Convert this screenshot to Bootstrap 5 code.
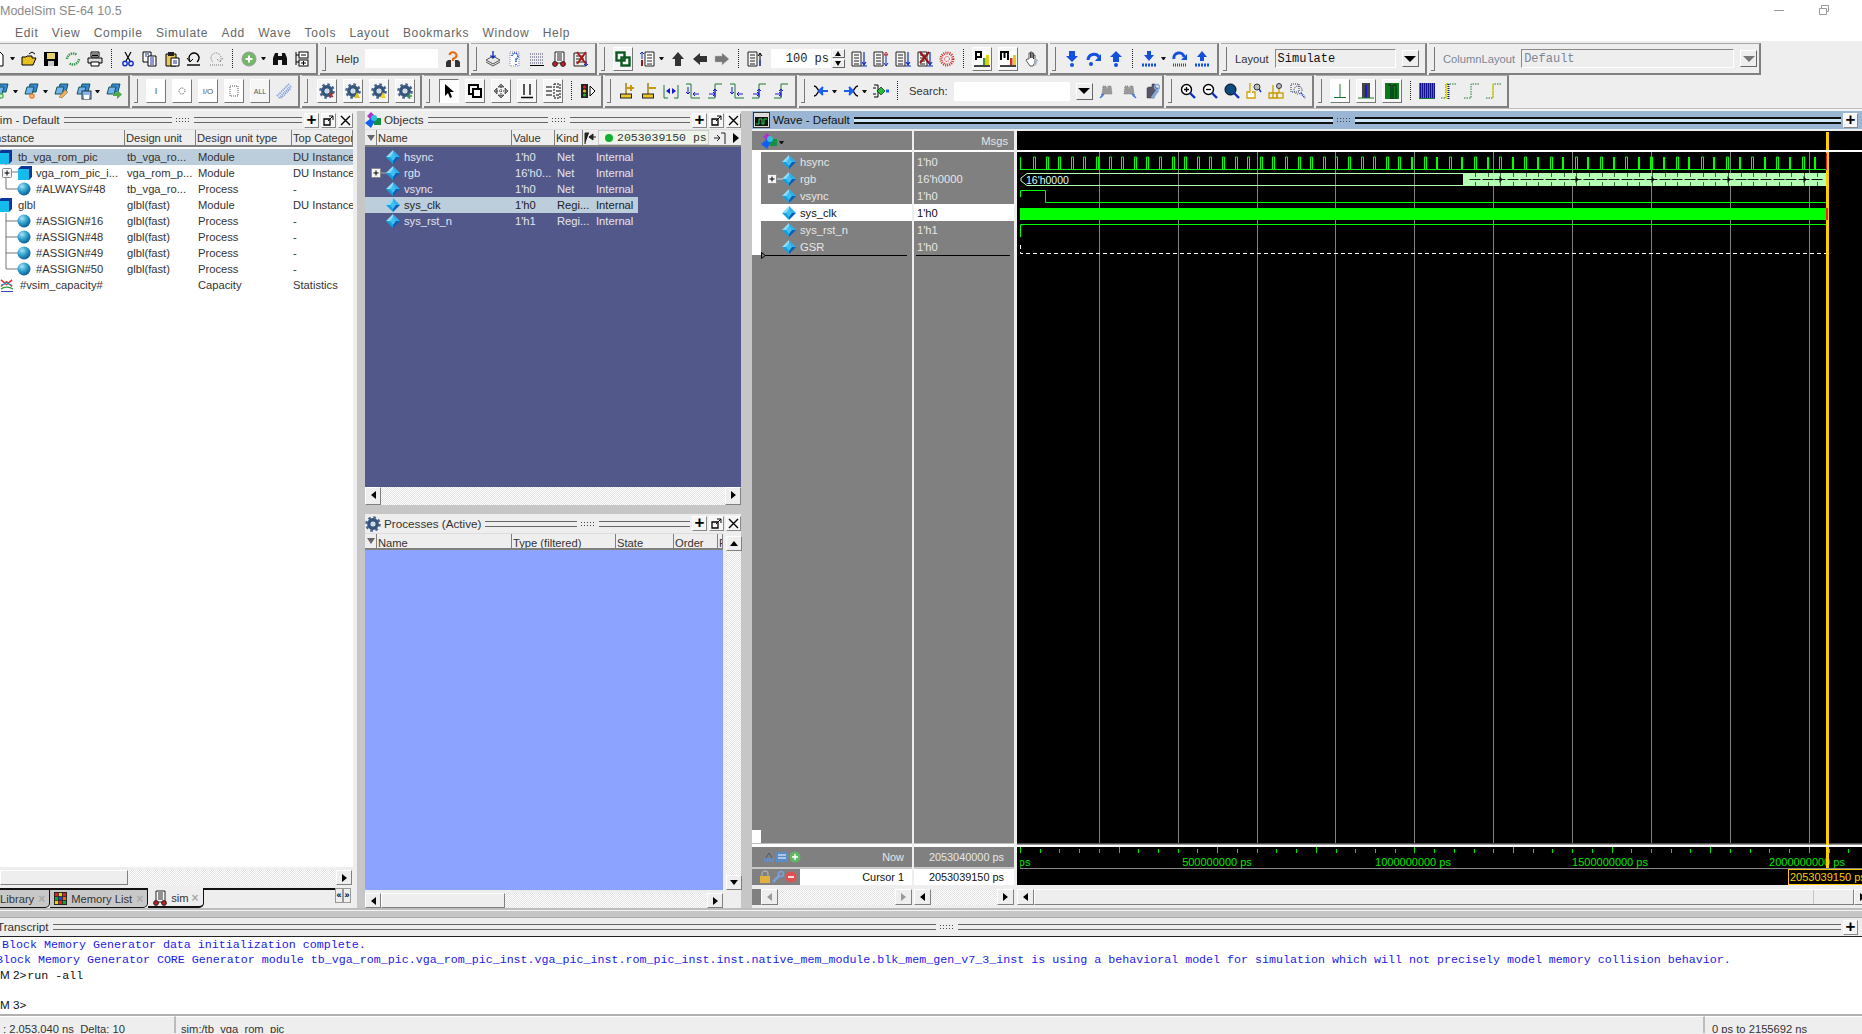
<!DOCTYPE html>
<html lang="en">
<head>
<meta charset="UTF-8">
<title>ModelSim SE-64 10.5</title>
<link href="https://cdn.jsdelivr.net/npm/bootstrap@5.3.0/dist/css/bootstrap.min.css" rel="stylesheet">
<style>
html,body{margin:0;height:1034px;overflow:hidden;background:#eee}
body{font:11.2px/16px "Liberation Sans",Arial,sans-serif;color:#333;width:1862px}
svg{display:block;flex:none;overflow:visible}
.ttl{height:22px;background:#fff;color:#8a8a8a;font-size:12.5px;line-height:23px;position:relative}
.winbtn{position:absolute;top:0;right:0;display:flex;gap:35px;padding:5px 33px 0 0}
.mnu{height:19px;background:#fff;color:#666;font-size:12px;letter-spacing:.7px;line-height:22px;gap:13.3px;padding-left:15px}
.band{height:2px;background:#eee}
.tr1,.tr2{display:grid;column-gap:2px;background:#eee;justify-content:start}
.tr1{height:32px;grid-template-columns:318px 149px 126px 449px 169px 206px 332px}
.tr2{height:33px;grid-template-columns:130px 168px 120px 179px 192px 365px 148px 193px}
.seg{display:flex;align-items:center;gap:6px;padding-left:2px;border-right:2px solid #808080;border-bottom:2px solid #808080;border-top:1px solid #a8a8a8;overflow:hidden;white-space:nowrap}
.seg.first{padding-left:0}
.grip{width:4px;height:24px;border:1px solid #777;border-top:0;border-left:0;margin-right:2px;flex:none}
.ti{width:16px;height:16px}
.dd{width:5px;height:3px;margin-left:-2px;border-top:3px solid #111;border-left:2.5px solid transparent;border-right:2.5px solid transparent;flex:none}
.dd2{margin:0 0 0 -3px}
.sp{width:1px;height:20px;margin:0 2px;background-image:linear-gradient(#222 50%,transparent 50%);background-size:1px 2px;flex:none}
.bx{width:20px;height:24px;display:flex;align-items:center;justify-content:center;flex:none;background:#f6f6f6;border:1px solid;border-color:#fff #777 #777 #fff}
.bx.dn{background:#fff;border-color:#777 #fff #fff #777}
.wt{background:#fff}
.tinp{border:0;outline:0;background:#fff;height:19px;padding:0 2px;font:12px "Liberation Mono",monospace;color:#222;flex:none}
.lbl{flex:none}
.cmb{height:19px;border:1px solid;border-color:#8a8a8a #fff #fff #8a8a8a;font:12px/18px "Liberation Mono",monospace;padding-left:2px;color:#111;flex:none}
.cbtn{width:17px;height:17px;background:#eee;border:1px solid;border-color:#fff #666 #666 #fff;display:flex;align-items:center;justify-content:center;flex:none}
.tri-d{width:0;height:0;border-top:6px solid #000;border-left:6px solid transparent;border-right:6px solid transparent}
.off{color:#7d8796}
.off .tri-d{border-top-color:#777}
.spin{width:13px;flex:none;display:flex;flex-direction:column;gap:1px;margin-left:-5px}
.spin b{height:9px;background:#eee;border:1px solid;border-color:#fff #666 #666 #fff;position:relative;display:block}
.spin b::after{content:"";position:absolute;left:2px;top:1px;border:3.5px solid transparent;border-top:0;border-bottom:5px solid #000}
.spin b+b::after{border-bottom:0;border-top:5px solid #000}
.hline{height:3px;background:linear-gradient(#bdbdbd 33%,#f4f4f4 33%)}
.wrk{display:flex;height:797px;background:#c6c6c6}
.pl{width:357px;background:#eee;display:flex;flex-direction:column}
.pm{width:376px;margin-left:8px;display:flex;flex-direction:column}
.pr{width:1110px;margin-left:11px;display:flex;flex-direction:column;background:#eee}
.ptl{height:18px;background:#eee;display:flex;align-items:center;gap:3px;white-space:nowrap;overflow:hidden;flex:none}
.ptl .nm{font-size:11.7px}
.dbl{flex:1 1 0;height:6px;border-top:1px solid #666;border-bottom:1px solid #666}
.dots{width:16px;height:6px;flex:none;background-image:radial-gradient(#444 40%,transparent 45%);background-size:3px 3px}
.pbt{width:15px;height:15px;flex:none;margin-left:-1px;background:#f6f6f6;border:1px solid;border-color:#fff #888 #888 #fff;font:700 17px/12px "Liberation Sans",sans-serif;color:#000;text-align:center}
.pbt svg{margin:1px}
.hd{height:18px;display:grid;background:#eee;border-top:1px solid #ddd;border-bottom:2px solid #808080;flex:none;overflow:hidden;white-space:nowrap}
.hd>div{border-right:1px solid #808080;padding-left:1px;overflow:hidden;line-height:17px}
.flt{display:flex;align-items:center;justify-content:center;padding:0!important}
.flt i{border-top:6px solid #666;border-left:4px solid transparent;border-right:4px solid transparent}
.tbody{background:#fff;flex:1 1 0;padding-top:2px;margin-right:4px;overflow:hidden}
.trw{display:grid;grid-template-columns:125px 71px 95px 62px;height:16px;white-space:nowrap;overflow:hidden}
.trw>div{overflow:hidden;display:flex;align-items:center;padding-left:2px}
.trw>div:first-child{padding-left:0}
.sel1{background:#bccddc}
.sb{height:15px;display:flex;background:repeating-conic-gradient(#e2e2e2 0 25%,#fff 0 50%) 0 0/2px 2px;flex:none}
.thm{background:#eee;border:1px solid;border-color:#fff #808080 #808080 #fff;flex:none}
.gr{flex:1 1 0}
.sa{width:16px;height:15px;background:#eee;border:1px solid;border-color:#fff #808080 #808080 #fff;position:relative;flex:none}
.sa::after{content:"";position:absolute;left:5px;top:3px;border:4px solid transparent;border-left:0;border-right:5px solid #000}
.sa.rt::after{border-right:0;border-left:5px solid #000}
.sa.up::after{left:3px;top:4px;border:4px solid transparent;border-top:0;border-bottom:5px solid #000}
.sa.dw::after{left:3px;top:4px;border:4px solid transparent;border-bottom:0;border-top:5px solid #000}
.sa.dis::after{border-left-color:#999;border-right-color:#999}
.tabs{height:20px;display:flex;margin-top:3px;flex:none;white-space:nowrap}
.tb1{display:flex;align-items:center;gap:4px;background:#c8c8c8;border-top:2px solid #111;border-right:1px solid #111;border-bottom:1px solid #111;border-radius:0 0 5px 0;padding:0 4px}
.tb1.act{background:#eee;border-top:0;padding-top:2px;border-bottom:2px solid #111;gap:3px}
.tbx{color:#aaa;font:700 12px/1 "Liberation Sans",sans-serif}
.tfill{flex:1 1 0;border-top:2px solid #111}
.tarr{width:17px;display:flex;background:#eee;align-items:flex-start}
.tarr b{width:8px;height:15px;border:1px solid #999;font:700 9px/13px "Liberation Sans",sans-serif;text-align:center;color:#000}
.obj{background:#52598a;flex:1 1 0;padding-top:2px;color:#e4e4ee;overflow:hidden}
.orw{display:grid;grid-template-columns:147px 45px 39px 42px;height:16px;width:273px;white-space:nowrap}
.orw>div{display:flex;align-items:center;overflow:hidden}
.orw>div:nth-child(2){padding-left:3px}
.osel{background:#bccddc;color:#222}
.gapy{height:9px;background:#c6c6c6;flex:none}
.proc{flex:1 1 0;display:flex;min-height:0}
.plft{width:358px;display:flex;flex-direction:column}
.pbody{background:#8ca3ff;flex:1 1 0}
.prgt{width:15px;margin-left:3px;display:flex;flex-direction:column;background:repeating-conic-gradient(#e2e2e2 0 25%,#fff 0 50%) 0 0/2px 2px;margin-top:3px;margin-bottom:18px}
.prgt .gr{flex:1}
.prgt .sa{height:15px}
.wvt{height:18px;background:#9ab6d4;display:flex;align-items:center;gap:3px;padding-left:1px;white-space:nowrap;flex:none}
.wvt .nm{font-size:11.7px;color:#111}
.dbl2{flex:1 1 0;height:7px;border-top:2px solid #111;border-bottom:2px solid #111;background:#cfe4f4}
.wb{display:flex;height:777px;margin-top:2px}
.wn{width:160px;display:flex;flex-direction:column;padding-bottom:3px}
.wv{width:100px;margin-left:2px;display:flex;flex-direction:column;padding-bottom:3px}
.ww{width:845px;margin-left:3px;display:flex;flex-direction:column}
.gh{height:19px;background:#808080;color:#e6e6e6;flex:none;display:flex;align-items:center}
.wl{height:2px;background:#fff;flex:none}
.grow{background:#808080;flex:1 1 0;color:#e6e6e6;position:relative}
.wrows{border-left:9px solid #fff;background:#808080;padding-top:1px;flex:none;color:#e6e6e6}
.wrw{height:17px;display:flex;align-items:center;white-space:nowrap}
.wsel{background:#fff;color:#111}
.vrw{padding-left:3px}
.vline{height:1px;background:#000;margin:0 4px 0 2px}
.nline{height:1px;background:#000;margin:0 5px 0 11px;position:relative}
.nline svg{position:absolute;left:-2px;top:-3px}
.stub{width:9px;height:13px;background:#fff;position:absolute;left:0;bottom:0}
.bnd{height:4px;background:linear-gradient(#bdbdbd 25%,#fff 25%);flex:none}
.nowr{height:20px;background:#808080;color:#e6e6e6;display:flex;align-items:center;flex:none;font-size:10.9px}
.curr{height:18px;background:#808080;display:flex;align-items:stretch;flex:none;border-top:2px solid #c8c8c8;color:#111;font-size:10.9px}
.curr .fill{background:#fff;display:flex;align-items:center;justify-content:flex-end;flex:1 1 0}
.ics{display:flex;gap:1px;align-items:center;justify-content:flex-end;padding-right:3px;flex:none}
.ics svg{width:12px;height:12px}
.sbw{margin-top:4px;height:16px}
.sbw .sa{height:16px;width:17px}
.mrk{width:1px;background:#fc0;flex:none}
.lt{height:10px;background:linear-gradient(#bdbdbd 20%,#f4f4f4 20%,#f4f4f4 30%,#c6c6c6 30%,#c6c6c6 90%,#aaa 90%);flex:none}
.tsh{height:19px;background:#eee;display:flex;align-items:center;gap:3px;white-space:nowrap;border-bottom:1px solid #222;overflow:hidden}
.tsh .nm{margin-left:-3px;font-size:11.7px}
.tsb{height:77px;background:#fff;font:11.66px/15px "Liberation Mono",monospace;padding-top:1px;overflow:hidden;color:#1a1ae6}
.tsb div{height:15px;white-space:pre}
.pmt{font:11.7px "Liberation Sans",sans-serif;margin-right:1px}
.cl{margin-left:-4px}
.p1{padding-left:2px}
.blk{color:#111}
.stb{height:19px;background:#eee;display:flex;white-space:nowrap;border-top:2px solid #b0b0b0;overflow:hidden;font-size:11.2px}
.stb>div{padding:4px 0 0 3px;border-top:1px solid #fff;border-right:2px solid #bbb}
.st1{width:176px}.st2{flex:1 1 0;padding-left:5px!important}.st3{width:157px;border-right:0!important;padding-left:7px!important}
.ms10{margin-left:-10px}.ms6{margin-left:-6px}.ms2{margin-left:2px}.ms1{margin-left:1px}.ms3{margin-left:3px}.mt3{margin-top:3px}
.help-in{width:73px}.spin-in{width:60px;text-align:right;margin-left:2px}.srch-in{width:116px}
.cmb-a{width:121px}.cmb-b{width:213px;color:#7d8796}
.ttl-cut{margin-left:-6px}
.hd-l{grid-template-columns:125px 71px 96px 61px;margin-right:4px}
.hcut{padding-left:0!important;text-indent:-8px}
.sb-l{margin-right:5px}.thm-l{width:128px}
.tb-lib{margin-left:-2px;padding-left:2px}
.tend{width:5px}
.obj-wrap{height:394px;flex:none}
.hd-o{grid-template-columns:12px 135px 43px 28px 1fr}
.hcur{display:flex;align-items:center;border-right:0!important;padding-left:0!important;gap:0;font:11.5px "Liberation Mono",monospace}
.tbox{display:flex;align-items:center;gap:4px;background:#eef6ea;width:111px;height:15px;border:1px solid #ccc;margin:0 4px 0 1px;padding-left:6px}
.gdot{width:8px;height:8px;border-radius:50%;background:#10b030;flex:none}
.rtri{border:5px solid transparent;border-left:6px solid #000;border-right:0;margin-left:6px}
.sb-o{height:18px}.sb-o .sa{height:18px}
.ptl-p{height:19px}
.hd-p{grid-template-columns:12px 135px 104px 58px 44px 5px;height:17px}
.hd-p>div{line-height:18px}
.thm-p{width:124px}
.bg-eee{background:#eee}
.wd-a{flex:0 0 479px}
.hd-dd{margin-left:2px;margin-top:3px}
.pe-msg{padding-right:6px}.pe-val{padding-right:10px}
.pe-n1{padding-right:8px}.pe-cur{padding-right:8px}
.ics-n{width:52px}.ics-c{width:48px}
.wsp{width:9px;flex:none;background:#808080}
.vrows{border-left:0}
.rcut{margin-right:-9px}
.mksp{flex:0 0 778px}
</style>
</head>
<body>
<svg width="0" height="0" class="position-absolute">
<defs>
<radialGradient id="sph" cx=".35" cy=".3" r=".8"><stop offset="0" stop-color="#a8e2f6"/><stop offset=".5" stop-color="#2a9ccc"/><stop offset="1" stop-color="#0a4f80"/></radialGradient>
<symbol id="mod" viewBox="0 0 14 14"><path d="M0 3h11v11H0z" fill="#14bcec"/><path d="M0 3l3-3h11v11l-3 3V3z" fill="#0b3596"/></symbol>
<symbol id="prc" viewBox="0 0 14 14"><circle cx="7" cy="7" r="6.5" fill="url(#sph)"/></symbol>
<symbol id="dia" viewBox="0 0 14 14"><path d="M7 0L0 7h7z" fill="#8ddcf8"/><path d="M7 0l7 7H7z" fill="#2cb0ec"/><path d="M0 7l7 7V7z" fill="#14a0e0"/><path d="M14 7l-7 7V7z" fill="#0a60b8"/><path d="M7 3L4 7l3 4 3-4z" fill="#40c0f0"/></symbol>
<symbol id="exp" viewBox="0 0 10 10"><rect x=".5" y=".5" width="9" height="9" rx="1" fill="#f4f4f8" stroke="#888"/><path d="M2.5 5h5M5 2.5v5" stroke="#000"/></symbol>
<symbol id="objs" viewBox="0 0 16 16"><path d="M6 0l4 4-4 4-4-4z" fill="#b030c8"/><rect x="9" y="6" width="7" height="7" fill="#109040"/><path d="M6 6l4 3-4 7-6-5z" fill="#1060f0"/><circle cx="9" cy="6" r="3" fill="#30c0d8"/></symbol>
<symbol id="gear" viewBox="0 0 16 16"><circle cx="8" cy="8" r="6.6" fill="none" stroke="#46648c" stroke-width="2.4" stroke-dasharray="2.6 2.6"/><circle cx="8" cy="8" r="4.2" fill="none" stroke="#35557c" stroke-width="3.4"/><circle cx="8" cy="8" r="2" fill="#c8d8e8"/></symbol>
<symbol id="new" viewBox="0 0 16 16"><path d="M3 1h7l3 3v11H3z" fill="#fff" stroke="#000"/></symbol>
<symbol id="open" viewBox="0 0 16 16"><path d="M1 14V6h4l1-1h5v2h4l-3 7z" fill="#e8c020" stroke="#000"/><path d="M8 3l3-2 3 2" fill="none" stroke="#000"/></symbol>
<symbol id="save" viewBox="0 0 16 16"><rect x="1" y="1" width="14" height="14" fill="#000"/><rect x="4" y="2" width="8" height="6" fill="#e8d070"/><rect x="5" y="10" width="6" height="5" fill="#ccc"/></symbol>
<symbol id="rel" viewBox="0 0 16 16"><g fill="none" stroke="#3a9a50" stroke-width="2.4" stroke-dasharray="1.4 .8"><path d="M2 8a6 6 0 0 1 10-4"/><path d="M14 8a6 6 0 0 1-10 4"/></g></symbol>
<symbol id="prn" viewBox="0 0 16 16"><path d="M4 1h8v5H4z" fill="#fff" stroke="#000"/><path d="M1 7h14v5H1z" fill="#ddd" stroke="#000"/><path d="M4 11h8v4H4z" fill="#fff" stroke="#000"/><path d="M5 3h6M5 4.5h6" stroke="#000"/></symbol>
<symbol id="cut" viewBox="0 0 16 16"><path d="M5 1l5 9M11 1l-5 9" stroke="#000" stroke-width="1.2"/><circle cx="5" cy="12.5" r="2.2" fill="none" stroke="#1030d0" stroke-width="1.4"/><circle cx="11" cy="12.5" r="2.2" fill="none" stroke="#1030d0" stroke-width="1.4"/></symbol>
<symbol id="cpy" viewBox="0 0 16 16"><path d="M1 1h8v10H1z" fill="#fff" stroke="#000"/><path d="M6 5h8v10H6z" fill="#fff" stroke="#000"/><path d="M3 3h4M3 5h2M8 7h4M8 9h4M8 11h4M8 13h4" stroke="#2030a0"/></symbol>
<symbol id="pst" viewBox="0 0 16 16"><path d="M2 3h10v12H2z" fill="#e8c860" stroke="#000"/><rect x="4" y="1" width="6" height="4" fill="#222"/><path d="M7 7h8v8H7z" fill="#fff" stroke="#000"/><path d="M9 10h4M9 12h4" stroke="#2030a0"/></symbol>
<symbol id="und" viewBox="0 0 16 16"><path d="M4 10a5 5 0 1 1 7 1" fill="none" stroke="#000" stroke-width="1.4"/><path d="M1 7l3 4 3-3" fill="none" stroke="#000"/><path d="M1 14h13" stroke="#000" stroke-width="1.4"/></symbol>
<symbol id="red" viewBox="0 0 16 16"><path d="M12 10a5 5 0 1 0-7 1M15 7l-3 4-3-3M2 14h13" fill="none" stroke="#777" stroke-dasharray="1 1"/></symbol>
<symbol id="pls" viewBox="0 0 16 16"><circle cx="8" cy="8" r="7" fill="#72b868" stroke="#9a9a9a"/><path d="M4.5 8h7M8 4.5v7" stroke="#fff" stroke-width="2"/></symbol>
<symbol id="bin" viewBox="0 0 16 16"><path d="M1 14V7l2-5h3v12zM15 14V7l-2-5h-3v12z" fill="#111"/><rect x="6" y="5" width="4" height="4" fill="#111"/></symbol>
<symbol id="hbin" viewBox="0 0 16 16"><path d="M1 16V11l2-2h3v7zM15 16V11l-2-2h-3v7z" fill="#333"/><path d="M4.500 4a3.500 3 0 1 1 5 3L8 8v2" fill="none" stroke="#e86c10" stroke-width="2.200"/></symbol>
<symbol id="tre" viewBox="0 0 16 16"><path d="M2 1v13M2 4h3M2 11h3" stroke="#000"/><rect x="5" y="1" width="9" height="6" fill="#fff" stroke="#000"/><rect x="5" y="9" width="9" height="6" fill="#fff" stroke="#000"/><path d="M7 4h5M7 12h5M9.5 10v4" stroke="#000"/></symbol>
<symbol id="lay" viewBox="0 0 16 16"><path d="M8 5L1 9l7 4 7-4z" fill="#e8e8e8" stroke="#555"/><path d="M1 11l7 4 7-4" fill="none" stroke="#555"/><path d="M8 0v7M5.5 4.5L8 7l2.5-2.5" fill="none" stroke="#1030c0" stroke-width="1.4"/></symbol>
<symbol id="qm" viewBox="0 0 16 16"><path d="M3 1h9v14H3z" fill="#fff" stroke="#88a" stroke-dasharray="1 1"/><path d="M5 5a3 3 0 1 1 4 3v3M9 13v1" fill="none" stroke="#1850d8" stroke-width="1.6" stroke-dasharray="1.2 .6"/></symbol>
<symbol id="grd" viewBox="0 0 16 16"><path d="M1 3h14M1 6h14M1 9h14M1 12h14" stroke="#446" stroke-dasharray="1 1"/><path d="M1 14.500h14" stroke="#000"/></symbol>
<symbol id="dcr" viewBox="0 0 16 16"><path d="M4 1h9v11H4z" fill="#fff" stroke="#222"/><path d="M6 3h5M6 5h5M6 7h5M6 9h5" stroke="#222"/><circle cx="4" cy="13" r="2.4" fill="#c02020" stroke="#222"/><circle cx="12" cy="13" r="2.4" fill="#c02020" stroke="#222"/></symbol>
<symbol id="dcx" viewBox="0 0 16 16"><path d="M1 2h12v13H1z" fill="#eee" stroke="#222"/><path d="M3 5h8M3 8h8M3 11h8" stroke="#222"/><path d="M4 1l9 12M13 1L4 13" stroke="#b01818" stroke-width="2"/><path d="M13 10v5M11 13l2 2 2-2" fill="none" stroke="#1030c0"/></symbol>
<symbol id="lnk" viewBox="0 0 16 16"><rect x="1.500" y="1.500" width="8" height="8" fill="none" stroke="#0a5a20" stroke-width="2.4"/><rect x="6.500" y="6.500" width="8" height="8" fill="none" stroke="#0a5a20" stroke-width="2.4"/></symbol>
<symbol id="lsf" viewBox="0 0 16 16"><path d="M6 1h9v14H6z" fill="#fff" stroke="#222"/><path d="M8 4h5M8 7h5M8 10h5M8 13h5" stroke="#222"/><path d="M3 9v6" stroke="#901818" stroke-width="2"/><path d="M3 8V1M1 3l2-2 2 2" fill="none" stroke="#1030c0"/></symbol>
<symbol id="au" viewBox="0 0 16 16"><path d="M8 1l6 7h-3v7H5V8H2z" fill="#333"/></symbol>
<symbol id="al" viewBox="0 0 16 16"><path d="M1 8l7-6v3h7v6H8v3z" fill="#333"/></symbol>
<symbol id="ar" viewBox="0 0 16 16"><path d="M15 8L8 2v3H1v6h7v3z" fill="#777" stroke="#bbb" stroke-dasharray="1 1"/></symbol>
<symbol id="lst" viewBox="0 0 16 16"><path d="M1 1h9v14H1z" fill="#f4f4f4" stroke="#222"/><path d="M3 4h5M3 7h5M3 10h5M3 13h5" stroke="#222"/></symbol>
<symbol id="lup" viewBox="0 0 16 16"><use href="#lst" width="16" height="16"/><path d="M13 15V2M11 5l2-3 2 3" fill="none" stroke="#000"/><path d="M13 15V9" stroke="#1030c0"/></symbol>
<symbol id="ldn" viewBox="0 0 16 16"><use href="#lst" width="16" height="16"/><path d="M13 1v13M11 11l2 3 2-3M10 15h6" fill="none" stroke="#1030c0" stroke-width="1.2"/></symbol>
<symbol id="lrd" viewBox="0 0 16 16"><use href="#lst" width="16" height="16"/><path d="M13 3v12M11 12l2 3 2-3" fill="none" stroke="#1030c0"/><path d="M11 4l2-3 2 3z" fill="none" stroke="#c03030"/></symbol>
<symbol id="lxx" viewBox="0 0 16 16"><use href="#ldn" width="16" height="16"/><path d="M3 1l9 11M12 1L3 12" stroke="#981414" stroke-width="2"/></symbol>
<symbol id="rdc" viewBox="0 0 16 16"><circle cx="8" cy="8" r="6" fill="none" stroke="#d03030" stroke-width="3" stroke-dasharray="1 1"/><circle cx="8" cy="8" r="2.500" fill="none" stroke="#d03030" stroke-dasharray="1 1"/></symbol>
<symbol id="brp" viewBox="0 0 18 18"><rect x="1" y="1" width="16" height="16" fill="#fff"/><rect x="1" y="15" width="16" height="2" fill="#444"/><rect x="10" y="8" width="2.500" height="7" fill="#30a030"/><rect x="13" y="5" width="3" height="10" fill="#e0d010"/><path d="M3 10V2h5v5H3" fill="none" stroke="#000" stroke-width="2"/></symbol>
<symbol id="brm" viewBox="0 0 18 18"><rect x="1" y="1" width="16" height="16" fill="#fff"/><rect x="1" y="15" width="16" height="2" fill="#444"/><rect x="11" y="8" width="2.500" height="7" fill="#d03020"/><rect x="14" y="5" width="3" height="10" fill="#e0d010"/><path d="M2 10V2h7v8M5.500 2v6" fill="none" stroke="#000" stroke-width="2"/></symbol>
<symbol id="hnd" viewBox="0 0 16 16"><path d="M5 8V2h1.500v5V1H8v6V2h1.500v6V4H11v7l-2 4H6L2 9l1-1z" fill="#fff" stroke="#333" stroke-width=".8"/><path d="M11 7l3 2-2 5-2 1z" fill="#a8b4c8"/></symbol>
<symbol id="bd" viewBox="0 0 16 16"><path d="M5 0h6v5h3l-6 6-6-6h3z" fill="#1450e0"/><circle cx="8" cy="14" r="2" fill="#1450e0"/></symbol>
<symbol id="bo" viewBox="0 0 16 16"><path d="M2 9a6 6 0 0 1 11-3" fill="none" stroke="#1450e0" stroke-width="3"/><path d="M15 3v7H9z" fill="#1450e0"/><circle cx="5" cy="13" r="2" fill="#1450e0"/></symbol>
<symbol id="bu" viewBox="0 0 16 16"><path d="M8 0l6 6h-3v5H5V6H2z" fill="#1450e0"/><circle cx="8" cy="14" r="2" fill="#1450e0"/></symbol>
<symbol id="bd2" viewBox="0 0 16 16"><path d="M6 0h4v4h3l-5 6-5-6h3z" fill="#1450e0"/><path d="M1 14h14" stroke="#1450e0" stroke-width="3" stroke-dasharray="2 1"/></symbol>
<symbol id="bo2" viewBox="0 0 16 16"><path d="M2 8a5 5 0 0 1 10-2" fill="none" stroke="#1450e0" stroke-width="3"/><path d="M15 3v6H9z" fill="#1450e0"/><path d="M1 14h14" stroke="#1450e0" stroke-width="3" stroke-dasharray="1 1"/></symbol>
<symbol id="bu2" viewBox="0 0 16 16"><path d="M8 0l5 6h-3v4H6V6H3z" fill="#1450e0"/><path d="M1 14h14" stroke="#1450e0" stroke-width="3" stroke-dasharray="2 1"/></symbol>
<symbol id="blu" viewBox="0 0 16 16"><path d="M6 1h8l-2 8H4z" fill="#3a88d8" stroke="#155"/><path d="M3 4h7l-2 7H1z" fill="#74b4ec" stroke="#155"/></symbol>
<symbol id="cur" viewBox="0 0 16 16"><path d="M4 1v12l3-3 2 5 2-1-2-5h4z" fill="#000"/></symbol>
<symbol id="zbx" viewBox="0 0 16 16"><path d="M2 2h9v9H2z" fill="none" stroke="#000" stroke-width="2"/><path d="M6 6h8v8H6z" fill="#fff" stroke="#000" stroke-width="2"/></symbol>
<symbol id="mov" viewBox="0 0 16 16"><path d="M8 1l3 3H5zM8 15l-3-3h6zM1 8l3-3v6zM15 8l-3 3V5z" fill="#888" stroke="#222" stroke-width=".6"/><path d="M8 4v8M4 8h8" stroke="#222" stroke-dasharray="1 1"/></symbol>
<symbol id="tcu" viewBox="0 0 16 16"><path d="M5 1v11M11 1v11M2 14.500h6M8 14.500h6" stroke="#000" stroke-width="1.300"/></symbol>
<symbol id="con" viewBox="0 0 16 16"><path d="M9 1h6v14H9z" fill="none" stroke="#000" stroke-dasharray="2 1"/><path d="M1 4h6M1 8h6M1 12h6M11 4h3M11 8h3M11 12h3" stroke="#000"/></symbol>
<symbol id="trf" viewBox="0 0 16 16"><rect x="1" y="1" width="7" height="14" fill="#222"/><circle cx="4.500" cy="4" r="1.600" fill="#e02020"/><circle cx="4.500" cy="8" r="1.600" fill="#e0c020"/><circle cx="4.500" cy="12" r="1.600" fill="#20b030"/><path d="M10 3l5 5-5 5z" fill="#fff" stroke="#000"/></symbol>
<symbol id="yp" viewBox="0 0 16 16"><path d="M7 0v11" stroke="#a07800" stroke-width="1.400"/><rect x="1.500" y="11" width="11" height="4" fill="#f0c820" stroke="#222"/><path d="M8 5h7" stroke="#c89a00" stroke-width="2"/><path d="M12 2v6" stroke="#c89a00" stroke-width="2"/></symbol>
<symbol id="ym" viewBox="0 0 16 16"><path d="M7 0v11" stroke="#a07800" stroke-width="1.400"/><rect x="1.500" y="11" width="11" height="4" fill="#f0c820" stroke="#222"/><path d="M8 5h7" stroke="#c89a00" stroke-width="2"/></symbol>
<symbol id="gl1" viewBox="0 0 16 16"><path d="M1 2v13h4M15 2v13h-4" fill="none" stroke="#187a30"/><path d="M3 8l4-3v6zM13 8L9 5v6z" fill="#1818d8"/></symbol>
<symbol id="gl2" viewBox="0 0 16 16"><path d="M1 1h5v14h9" fill="none" stroke="#187a30"/><path d="M3 4v7M1 9l2 2 2-2M8 11h6M10 9l-2 2 2 2" fill="none" stroke="#1818d8"/></symbol>
<symbol id="gl3" viewBox="0 0 16 16"><path d="M1 15h7V1h7" fill="none" stroke="#187a30"/><path d="M8 14V6M6 8l2-2 2 2M2 11h6M6 9l2 2-2 2" fill="none" stroke="#1818d8"/></symbol>
<symbol id="cl" viewBox="0 0 16 16"><path d="M1 3c3 0 3 3 5 5-2 2-2 5-5 5" fill="none" stroke="#000" stroke-width="1.300"/><path d="M15 8H7M10 4L6 8l4 4" fill="#1860f0" stroke="#1860f0" stroke-width="2"/></symbol>
<symbol id="cr" viewBox="0 0 16 16"><path d="M15 3c-3 0-3 3-5 5 2 2 2 5 5 5" fill="none" stroke="#000" stroke-width="1.300"/><path d="M1 8h8M6 4l4 4-4 4" fill="#1860f0" stroke="#1860f0" stroke-width="2"/></symbol>
<symbol id="cm" viewBox="0 0 16 16"><path d="M1 2h4v12H1" fill="none" stroke="#000"/><path d="M8 4l4 4-4 4-4-4z" fill="#20c030" stroke="#000" stroke-width=".6"/><rect x="13" y="6.500" width="3" height="3" fill="#1860f0"/><path d="M0 5h3M0 11h3" stroke="#000"/></symbol>
<symbol id="s1" viewBox="0 0 16 16"><path d="M3 11L4 3h3l1 4 1-4h3l1 8z" fill="#999" stroke="#888" stroke-dasharray="1 1"/><path d="M1 15l4-4M3 11v3" stroke="#4878d8" stroke-width="1.500"/></symbol>
<symbol id="s2" viewBox="0 0 16 16"><path d="M3 11L4 3h3l1 4 1-4h3l1 8z" fill="#999" stroke="#888" stroke-dasharray="1 1"/><path d="M15 15l-4-4M13 11v3" stroke="#4878d8" stroke-width="1.500"/></symbol>
<symbol id="tol" viewBox="0 0 16 16"><path d="M3 15V5l2-1h3V1h3l1 4h2l-4 10z" fill="#556" stroke="#334" stroke-width=".5"/><path d="M8 15l6-8" stroke="#80a8d8" stroke-width="3"/><circle cx="13" cy="4" r="2.400" fill="none" stroke="#80a8d8" stroke-width="1.500"/></symbol>
<symbol id="zi" viewBox="0 0 16 16"><circle cx="6.500" cy="6.500" r="5" fill="#fff" stroke="#000" stroke-width="1.400"/><path d="M4 6.500h5M6.500 4v5" stroke="#000" stroke-width="1.300"/><path d="M10 10l5 5" stroke="#1030c0" stroke-width="2.400"/></symbol>
<symbol id="zo" viewBox="0 0 16 16"><circle cx="6.500" cy="6.500" r="5" fill="#fff" stroke="#000" stroke-width="1.400"/><path d="M4 6.500h5" stroke="#000" stroke-width="1.300"/><path d="M10 10l5 5" stroke="#1030c0" stroke-width="2.400"/></symbol>
<symbol id="zf" viewBox="0 0 16 16"><circle cx="6.500" cy="6.500" r="5.500" fill="#0c4a80" stroke="#000"/><path d="M10 10l5 5" stroke="#1030c0" stroke-width="2.400"/></symbol>
<symbol id="zy" viewBox="0 0 16 16"><path d="M4 0v9h-3v6h8V9H6" fill="#fff" stroke="#d0a000" stroke-width="1.300"/><circle cx="11" cy="4" r="3" fill="#bbb" stroke="#334"/><path d="M13 6l2 3" stroke="#1030c0" stroke-width="1.400"/></symbol>
<symbol id="zz" viewBox="0 0 16 16"><path d="M5 2v8M1 10h8v5H1zM5 10v5M11 5v5" fill="none" stroke="#c89a00" stroke-width="1.300"/><rect x="9" y="10" width="6" height="5" fill="none" stroke="#c89a00" stroke-width="1.300"/><circle cx="11" cy="3" r="2.500" fill="#bbb" stroke="#334"/></symbol>
<symbol id="zd" viewBox="0 0 16 16"><path d="M1 1h8v8H1z" fill="none" stroke="#236" stroke-dasharray="1 1"/><circle cx="8" cy="7" r="4" fill="none" stroke="#234" stroke-dasharray="1 1"/><path d="M11 10l4 5" stroke="#1030c0" stroke-width="2" stroke-dasharray="1 1"/></symbol>
<symbol id="wa" viewBox="0 0 18 18"><path d="M9 2v13M3 15.500h12" stroke="#187a30"/></symbol>
<symbol id="wbb" viewBox="0 0 18 18"><rect x="5" y="1" width="8" height="15" fill="#444"/><rect x="8" y="3" width="2" height="13" fill="#1818d0"/><path d="M1 16h16" stroke="#187a30"/></symbol>
<symbol id="wc" viewBox="0 0 18 18"><rect x="2" y="1" width="14" height="16" fill="#0c7a18"/><path d="M5 3h3v14M10 17V3h3v14" fill="none" stroke="#022"/></symbol>
<symbol id="wd" viewBox="0 0 16 16"><rect width="16" height="16" fill="#10108a"/><path d="M0 1h16M0 3h16M0 5h16M0 7h16M0 9h16M0 11h16M0 13h16M0 15h16" stroke="#fff" stroke-dasharray="1 1" opacity=".7"/><path d="M0 15.500h16" stroke="#187a30"/></symbol>
<symbol id="we" viewBox="0 0 16 16"><path d="M0 15h5V1h11" fill="none" stroke="#187a30" stroke-dasharray="1.500 1"/><path d="M5.500 0v16" stroke="#e0e020" stroke-width="1.200"/><path d="M7.500 1v15" stroke="#10108a" stroke-width="2" stroke-dasharray="1 1"/></symbol>
<symbol id="wf" viewBox="0 0 16 16"><path d="M1 15h7V1h8" fill="none" stroke="#187a30" stroke-dasharray="1.500 1"/></symbol>
<symbol id="wg" viewBox="0 0 16 16"><path d="M1 15h7V1h8" fill="none" stroke="#187a30" stroke-dasharray="1.500 1"/><path d="M8 1v14" stroke="#e0d010" stroke-width="1.300"/></symbol>
<symbol id="pop" viewBox="0 0 11 11"><path d="M1 4h6v6H1z" fill="none" stroke="#000" stroke-width="1.300"/><path d="M5 6l5-5M6 1h4v4" fill="none" stroke="#000"/></symbol>
<symbol id="xx" viewBox="0 0 11 11"><path d="M1 1l9 9M10 1l-9 9" stroke="#000" stroke-width="1.400"/></symbol>
<symbol id="mem" viewBox="0 0 14 14"><rect width="14" height="14" fill="#222"/><rect x="1" y="1" width="3.500" height="3.500" fill="#e02020"/><rect x="5.200" y="1" width="3.500" height="3.500" fill="#e0d020"/><rect x="9.500" y="1" width="3.500" height="3.500" fill="#e02020"/><rect x="1" y="5.200" width="3.500" height="3.500" fill="#20a030"/><rect x="5.200" y="5.200" width="3.500" height="3.500" fill="#2040e0"/><rect x="9.500" y="5.200" width="3.500" height="3.500" fill="#e07020"/><rect x="1" y="9.500" width="3.500" height="3.500" fill="#e0d020"/><rect x="5.200" y="9.500" width="3.500" height="3.500" fill="#e02020"/><rect x="9.500" y="9.500" width="3.500" height="3.500" fill="#20a030"/></symbol>
<symbol id="cap" viewBox="0 0 15 15"><path d="M1 2l6 5 6-5M1 9l6-5 6 5" fill="none" stroke="#e03030" stroke-width="1.500"/><path d="M1 8l6-3 6 3" fill="none" stroke="#1898c8" stroke-width="1.300"/><path d="M1 12c3-3 9-3 13 0" fill="none" stroke="#30a040" stroke-width="1.500"/><path d="M1 14.500h13" stroke="#2030c0"/></symbol>
</defs>
</svg>

<div class="ttl overflow-hidden text-nowrap">ModelSim SE-64 10.5<div class="winbtn"><svg width="10" height="10"><path d="M0 5.500h10" stroke="#999"/></svg><svg width="10" height="10"><path d="M.5 3.500h7v6h-7zM2.500 3V.5h7v6H8" fill="none" stroke="#999"/></svg></div></div>
<div class="mnu d-flex text-nowrap"><span>Edit</span><span>View</span><span>Compile</span><span>Simulate</span><span>Add</span><span>Wave</span><span>Tools</span><span>Layout</span><span>Bookmarks</span><span>Window</span><span>Help</span></div>
<div class="band"></div>

<div class="tr1">
 <div class="seg first"><svg class="ti ms10"><use href="#new"/></svg><i class="dd"></i><svg class="ti"><use href="#open"/></svg><svg class="ti"><use href="#save"/></svg><svg class="ti"><use href="#rel"/></svg><svg class="ti"><use href="#prn"/></svg><i class="sp"></i><svg class="ti"><use href="#cut"/></svg><svg class="ti"><use href="#cpy"/></svg><svg class="ti"><use href="#pst"/></svg><svg class="ti"><use href="#und"/></svg><svg class="ti"><use href="#red"/></svg><i class="sp"></i><svg class="ti"><use href="#pls"/></svg><i class="dd"></i><svg class="ti"><use href="#bin"/></svg><svg class="ti"><use href="#tre"/></svg></div>
 <div class="seg"><i class="grip"></i><span class="lbl ms2">Help</span><input class="tinp help-in"><svg class="ti ms1"><use href="#hbin"/></svg></div>
 <div class="seg"><i class="grip"></i><svg class="ti"><use href="#lay"/></svg><svg class="ti"><use href="#qm"/></svg><svg class="ti"><use href="#grd"/></svg><svg class="ti"><use href="#dcr"/></svg><svg class="ti"><use href="#dcx"/></svg></div>
 <div class="seg"><i class="grip"></i><span class="bx"><svg class="ti"><use href="#lnk"/></svg></span><svg class="ti"><use href="#lsf"/></svg><i class="dd"></i><svg class="ti"><use href="#au"/></svg><svg class="ti"><use href="#al"/></svg><svg class="ti"><use href="#ar"/></svg><i class="sp"></i><svg class="ti"><use href="#lup"/></svg><input class="tinp spin-in" value="100 ps"><span class="spin"><b></b><b></b></span><svg class="ti"><use href="#ldn"/></svg><svg class="ti"><use href="#lrd"/></svg><svg class="ti"><use href="#ldn"/></svg><svg class="ti"><use href="#lxx"/></svg><svg class="ti"><use href="#rdc"/></svg><i class="sp"></i><span class="bx"><svg width="18" height="18"><use href="#brp"/></svg></span><span class="bx"><svg width="18" height="18"><use href="#brm"/></svg></span><svg class="ti"><use href="#hnd"/></svg></div>
 <div class="seg"><i class="grip"></i><svg class="ti"><use href="#bd"/></svg><svg class="ti"><use href="#bo"/></svg><svg class="ti"><use href="#bu"/></svg><i class="sp"></i><svg class="ti"><use href="#bd2"/></svg><i class="dd"></i><svg class="ti"><use href="#bo2"/></svg><svg class="ti"><use href="#bu2"/></svg></div>
 <div class="seg"><i class="grip"></i><span class="lbl">Layout</span><span class="cmb cmb-a">Simulate</span><span class="cbtn ms-n1"><i class="tri-d"></i></span></div>
 <div class="seg off"><i class="grip"></i><span class="lbl">ColumnLayout</span><span class="cmb cmb-b off">Default</span><span class="cbtn ms-n1"><i class="tri-d"></i></span></div>
</div>

<div class="tr2">
 <div class="seg first"><svg class="ti ms6"><use href="#blu"/><circle cx="7" cy="13" r="2.800" fill="#4cb050"/><path d="M5.500 13h3M7 11.500v3" stroke="#fff"/></svg><i class="dd dd2"></i><svg class="ti"><use href="#blu"/><circle cx="8" cy="13" r="2.800" fill="#e88030"/><path d="M6.500 13h3" stroke="#fff"/></svg><i class="dd dd2"></i><svg class="ti"><use href="#blu"/><path d="M5 14l6-7 3 2-6 6z" fill="#e8b060" stroke="#a07030" stroke-width=".6"/></svg><svg class="ti"><use href="#blu"/><rect x="6" y="8" width="9" height="8" fill="#8ab4e8" stroke="#234"/><rect x="8" y="12" width="5" height="4" fill="#fff"/></svg><i class="dd dd2"></i><svg class="ti"><use href="#blu"/><path d="M7 10h4V7l5 4.500-5 4.500v-3H7z" fill="#50a848"/></svg></div>
 <div class="seg"><i class="grip"></i><span class="bx wt"><svg class="ti"><text x="8" y="11" text-anchor="middle" font-size="9" fill="#555">I</text></svg></span><span class="bx wt"><svg class="ti"><circle cx="8" cy="8" r="3" fill="none" stroke="#555" stroke-dasharray="1 1"/></svg></span><span class="bx wt"><svg class="ti"><text x="8" y="11" text-anchor="middle" font-size="8" fill="#555">I/O</text></svg></span><span class="bx wt"><svg class="ti"><path d="M4 3h8v10H4z" fill="none" stroke="#555" stroke-dasharray="1 1"/></svg></span><span class="bx"><svg class="ti"><text x="8" y="11" text-anchor="middle" font-size="7" fill="#555">ALL</text></svg></span><svg class="ti"><path d="M1 13L13 1M3 15L15 3M5 15L15 5" stroke="#7a9ae0" stroke-width="2" stroke-dasharray="1 1"/></svg></div>
 <div class="seg"><i class="grip"></i><span class="bx ms1"><svg class="ti"><use href="#gear"/><path d="M10 10l4 4M14 10l-4 4" stroke="#b03030" stroke-width="1.500"/></svg></span><span class="bx"><svg class="ti"><use href="#gear"/><path d="M9 15l3-6 3 6z" fill="#e0c020"/></svg></span><span class="bx"><svg class="ti"><use href="#gear"/><path d="M9 15l3-6 3 6z" fill="#f0d020"/></svg></span><span class="bx"><svg class="ti"><use href="#gear"/><path d="M10 13h5M12.500 10v6" stroke="#30a040" stroke-width="1.500"/></svg></span></div>
 <div class="seg"><i class="grip"></i><span class="bx dn ms1"><svg class="ti"><use href="#cur"/></svg></span><span class="bx"><svg class="ti"><use href="#zbx"/></svg></span><span class="bx"><svg class="ti"><use href="#mov"/></svg></span><span class="bx"><svg class="ti"><use href="#tcu"/></svg></span><span class="bx"><svg class="ti"><use href="#con"/></svg></span><i class="sp"></i><svg class="ti"><use href="#trf"/></svg></div>
 <div class="seg"><i class="grip"></i><svg class="ti"><use href="#yp"/></svg><svg class="ti"><use href="#ym"/></svg><svg class="ti"><use href="#gl1"/></svg><svg class="ti"><use href="#gl2"/></svg><svg class="ti"><use href="#gl3"/></svg><svg class="ti"><use href="#gl2"/></svg><svg class="ti"><use href="#gl3"/></svg><svg class="ti"><use href="#gl3"/></svg></div>
 <div class="seg"><i class="grip"></i><svg class="ti"><use href="#cl"/></svg><i class="dd dd2"></i><svg class="ti"><use href="#cr"/></svg><i class="dd dd2"></i><svg class="ti"><use href="#cm"/></svg><i class="sp"></i><span class="lbl ms3">Search:</span><input class="tinp srch-in"><span class="cbtn ms-n1"><i class="tri-d"></i></span><svg class="ti"><use href="#s1"/></svg><svg class="ti ms-n1"><use href="#s2"/></svg><svg class="ti ms1"><use href="#tol"/></svg></div>
 <div class="seg"><i class="grip"></i><svg class="ti"><use href="#zi"/></svg><svg class="ti"><use href="#zo"/></svg><svg class="ti"><use href="#zf"/></svg><svg class="ti"><use href="#zy"/></svg><svg class="ti"><use href="#zz"/></svg><svg class="ti"><use href="#zd"/></svg></div>
 <div class="seg"><i class="grip"></i><span class="bx wt"><svg width="18" height="18"><use href="#wa"/></svg></span><span class="bx"><svg width="18" height="18"><use href="#wbb"/></svg></span><span class="bx"><svg width="18" height="18"><use href="#wc"/></svg></span><i class="sp"></i><svg class="ti"><use href="#wd"/></svg><svg class="ti"><use href="#we"/></svg><svg class="ti"><use href="#wf"/></svg><svg class="ti"><use href="#wg"/></svg></div>
</div>
<div class="hline"></div>

<div class="wrk">
 <!-- structure pane -->
 <div class="pl">
  <div class="ptl pe-1"><span class="nm ttl-cut">sim - Default</span><i class="dbl ms1"></i><i class="dots"></i><i class="dbl"></i><span class="pbt">+</span><span class="pbt"><svg width="11" height="11"><use href="#pop"/></svg></span><span class="pbt"><svg width="11" height="11"><use href="#xx"/></svg></span></div>
  <div class="hd hd-l"><div class="hcut">Instance</div><div>Design unit</div><div>Design unit type</div><div>Top Category</div></div>
  <div class="tbody">
   <div class="trw sel1"><div><svg class="l1" width="18" height="16"><use href="#mod" x="-2" y="1" width="14" height="14"/><path d="M6 15v1" stroke="#777"/></svg>tb_vga_rom_pic</div><div>tb_vga_ro...</div><div>Module</div><div>DU Instance</div></div>
   <div class="trw"><div><svg width="36" height="16"><path d="M6 12v4M11 7h8" stroke="#777"/><use href="#exp" x="2" y="3" width="10" height="10"/><use href="#mod" x="18" y="1" width="14" height="14"/></svg>vga_rom_pic_i...</div><div>vga_rom_p...</div><div>Module</div><div>DU Instance</div></div>
   <div class="trw"><div><svg width="36" height="16"><path d="M6 0v8h12" fill="none" stroke="#777"/><use href="#prc" x="17" y="1" width="14" height="14"/></svg>#ALWAYS#48</div><div>tb_vga_ro...</div><div>Process</div><div>-</div></div>
   <div class="trw"><div><svg width="18" height="16"><use href="#mod" x="-2" y="1" width="14" height="14"/></svg>glbl</div><div>glbl(fast)</div><div>Module</div><div>DU Instance</div></div>
   <div class="trw"><div><svg width="36" height="16"><path d="M6 0v16M6 8h12" fill="none" stroke="#777"/><use href="#prc" x="17" y="1" width="14" height="14"/></svg>#ASSIGN#16</div><div>glbl(fast)</div><div>Process</div><div>-</div></div>
   <div class="trw"><div><svg width="36" height="16"><path d="M6 0v16M6 8h12" fill="none" stroke="#777"/><use href="#prc" x="17" y="1" width="14" height="14"/></svg>#ASSIGN#48</div><div>glbl(fast)</div><div>Process</div><div>-</div></div>
   <div class="trw"><div><svg width="36" height="16"><path d="M6 0v16M6 8h12" fill="none" stroke="#777"/><use href="#prc" x="17" y="1" width="14" height="14"/></svg>#ASSIGN#49</div><div>glbl(fast)</div><div>Process</div><div>-</div></div>
   <div class="trw"><div><svg width="36" height="16"><path d="M6 0v8h12" fill="none" stroke="#777"/><use href="#prc" x="17" y="1" width="14" height="14"/></svg>#ASSIGN#50</div><div>glbl(fast)</div><div>Process</div><div>-</div></div>
   <div class="trw"><div><svg width="20" height="16"><use href="#cap" x="0" y="1" width="14" height="14"/></svg>#vsim_capacity#</div><div></div><div>Capacity</div><div>Statistics</div></div>
  </div>
  <div class="sb mt3 sb-l"><div class="thm thm-l"></div><div class="gr"></div><div class="sa rt"></div></div>
  <div class="tabs">
   <div class="tb1 tb-lib">Library <span class="tbx">×</span></div>
   <div class="tb1"><svg width="13" height="13"><use href="#mem"/></svg>Memory List <span class="tbx">×</span></div>
   <div class="tb1 act"><svg class="ti"><use href="#dcr"/></svg>sim <span class="tbx">×</span></div>
   <div class="tfill"></div>
   <div class="tarr"><b>«</b><b>»</b></div>
   <div class="tend"></div>
  </div>
 </div>

 <div class="pm">
  <!-- objects -->
  <div class="d-flex flex-column obj-wrap">
   <div class="ptl"><svg class="ti"><use href="#objs"/></svg><span class="nm">Objects</span><i class="dbl ms1"></i><i class="dots"></i><i class="dbl"></i><span class="pbt">+</span><span class="pbt"><svg width="11" height="11"><use href="#pop"/></svg></span><span class="pbt"><svg width="11" height="11"><use href="#xx"/></svg></span></div>
   <div class="hd hd-o"><div class="flt"><i></i></div><div>Name</div><div>Value</div><div>Kind</div><div class="hcur">
     <svg width="14" height="14"><path d="M2 13V2h4M6 6l4-3v6z M6 6h7" fill="#222" stroke="#222"/></svg>
     <span class="tbox"><i class="gdot"></i>2053039150 ps</span>
     <svg width="14" height="14"><path d="M8 2h4v11M1 7h6M4 4l3 3-3 3" fill="none" stroke="#222"/></svg>
     <i class="rtri"></i>
   </div></div>
   <div class="obj">
    <div class="orw"><div><svg width="39" height="16"><use href="#dia" x="21" y="1" width="14" height="14"/></svg>hsync</div><div>1'h0</div><div>Net</div><div>Internal</div></div>
    <div class="orw"><div><svg width="39" height="16"><path d="M14 8h8" stroke="#aaa"/><use href="#exp" x="6" y="3" width="10" height="10"/><use href="#dia" x="21" y="1" width="14" height="14"/></svg>rgb</div><div>16'h0...</div><div>Net</div><div>Internal</div></div>
    <div class="orw"><div><svg width="39" height="16"><use href="#dia" x="21" y="1" width="14" height="14"/></svg>vsync</div><div>1'h0</div><div>Net</div><div>Internal</div></div>
    <div class="orw osel"><div><svg width="39" height="16"><use href="#dia" x="21" y="1" width="14" height="14"/></svg>sys_clk</div><div>1'h0</div><div>Regi...</div><div>Internal</div></div>
    <div class="orw"><div><svg width="39" height="16"><use href="#dia" x="21" y="1" width="14" height="14"/></svg>sys_rst_n</div><div>1'h1</div><div>Regi...</div><div>Internal</div></div>
   </div>
   <div class="sb sb-o"><div class="sa"></div><div class="gr"></div><div class="sa rt"></div></div>
  </div>
  <div class="gapy"></div>
  <!-- processes -->
  <div class="ptl ptl-p"><svg class="ti"><use href="#gear"/></svg><span class="nm">Processes (Active)</span><i class="dbl ms1"></i><i class="dots"></i><i class="dbl"></i><span class="pbt">+</span><span class="pbt"><svg width="11" height="11"><use href="#pop"/></svg></span><span class="pbt"><svg width="11" height="11"><use href="#xx"/></svg></span></div>
  <div class="proc bg-eee">
   <div class="plft">
    <div class="hd hd-p"><div class="flt"><i></i></div><div>Name</div><div>Type (filtered)</div><div>State</div><div>Order</div><div>F</div></div>
    <div class="pbody"></div>
    <div class="sb mt3"><div class="sa"></div><div class="thm thm-p"></div><div class="gr"></div><div class="sa rt"></div></div>
   </div>
   <div class="prgt"><div class="sa up"></div><div class="gr"></div><div class="sa dw"></div></div>
  </div>
 </div>

 <!-- wave -->
 <div class="pr">
  <div class="wvt"><svg width="17" height="16"><rect x=".5" y=".5" width="16" height="15" fill="#ddd" stroke="#333"/><rect x="2" y="5" width="13" height="9" fill="#111"/><path d="M3 12h3V7h3v5h2V7h3" fill="none" stroke="#2ad050"/></svg><span class="nm">Wave - Default</span><i class="dbl2 ms1 wd-a"></i><i class="dots"></i><i class="dbl2"></i><span class="pbt me-1">+</span></div>
  <div class="wb">
   <div class="wn">
    <div class="gh ps-2"><svg class="ti ms1"><use href="#objs"/></svg><i class="dd hd-dd"></i></div>
    <div class="wl"></div>
    <div class="wrows">
     <div class="wrw"><svg width="39" height="17"><use href="#dia" x="21" y="2" width="14" height="14"/></svg>hsync</div>
     <div class="wrw"><svg width="39" height="17"><path d="M14 9h8" stroke="#ddd"/><use href="#exp" x="6" y="4" width="10" height="10"/><use href="#dia" x="21" y="2" width="14" height="14"/></svg>rgb</div>
     <div class="wrw"><svg width="39" height="17"><use href="#dia" x="21" y="2" width="14" height="14"/></svg>vsync</div>
     <div class="wrw wsel"><svg width="39" height="17"><use href="#dia" x="21" y="2" width="14" height="14"/></svg>sys_clk</div>
     <div class="wrw"><svg width="39" height="17"><use href="#dia" x="21" y="2" width="14" height="14"/></svg>sys_rst_n</div>
     <div class="wrw"><svg width="39" height="17"><use href="#dia" x="21" y="2" width="14" height="14"/></svg>GSR</div>
    </div>
    <div class="grow"><div class="nline"><svg width="5" height="7"><path d="M.5.5l4 3-4 3z" fill="#808080" stroke="#000"/></svg></div><div class="stub"></div></div>
    <div class="bnd"></div>
    <div class="nowr"><div class="ics ics-n"><svg><rect x="1" y="7" width="10" height="4" fill="#6a8ab8"/><path d="M3 7l3-5 3 5" fill="none" stroke="#556"/></svg><svg><rect x="0" y="1" width="12" height="10" fill="#5a8cc8"/><path d="M2 4h8M2 7h8" stroke="#fff"/></svg><svg><circle cx="6" cy="6" r="5.500" fill="#62b862"/><path d="M3 6h6M6 3v6" stroke="#fff" stroke-width="1.400"/></svg></div><div class="flex-grow-1 text-end pe-n1">Now</div></div>
    <div class="curr"><div class="ics ics-c"><svg><rect x="1" y="5" width="10" height="7" fill="#e0b040"/><path d="M3 5V3a3 3 0 0 1 6 0v2" fill="none" stroke="#aaa" stroke-width="1.300"/></svg><svg><path d="M1 11l6-6" stroke="#7aa0d8" stroke-width="2.600"/><circle cx="9" cy="3" r="2.500" fill="none" stroke="#7aa0d8" stroke-width="1.600"/></svg><svg><circle cx="6" cy="6" r="5.500" fill="#e05050"/><path d="M3 6h6" stroke="#fff" stroke-width="1.600"/></svg></div><div class="fill pe-cur">Cursor 1</div></div>
    <div class="sb sbw"><div class="wsp"></div><div class="sa dis"></div><div class="gr"></div><div class="sa rt dis"></div></div>
   </div>
   <div class="wv">
    <div class="gh justify-content-end pe-msg">Msgs</div>
    <div class="wl"></div>
    <div class="wrows vrows">
     <div class="wrw vrw">1'h0</div><div class="wrw vrw">16'h0000</div><div class="wrw vrw">1'h0</div><div class="wrw vrw wsel">1'h0</div><div class="wrw vrw">1'h1</div><div class="wrw vrw">1'h0</div>
    </div>
    <div class="grow"><div class="vline"></div></div>
    <div class="bnd"></div>
    <div class="nowr justify-content-end pe-val">2053040000 ps</div>
    <div class="curr"><div class="fill pe-val">2053039150 ps</div></div>
    <div class="sb sbw"><div class="sa"></div><div class="gr"></div><div class="sa rt"></div></div>
   </div>
   <div class="ww">
    <svg id="wave" width="845" height="754" viewBox="1017 131 845 754"></svg>
    <div class="sb sbw"><div class="sa"></div><div class="thm gr d-flex"><span class="mksp"></span><i class="mrk"></i></div><div class="sa rt rcut"></div></div>
   </div>
  </div>
 </div>
</div>

<div class="lt"></div>
<div class="tsh"><span class="nm">Transcript</span><i class="dbl ms1"></i><i class="dots"></i><i class="dbl"></i><span class="pbt me-1">+</span></div>
<div class="tsb">
<div class="p1">Block Memory Generator data initialization complete.</div>
<div class="cl">Block Memory Generator CORE Generator module tb_vga_rom_pic.vga_rom_pic_inst.vga_pic_inst.rom_pic_inst.inst.native_mem_module.blk_mem_gen_v7_3_inst is using a behavioral model for simulation which will not precisely model memory collision behavior.</div>
<div class="blk"><span class="pmt">M 2&gt;</span>run -all</div>
<div></div>
<div class="blk"><span class="pmt">M 3&gt;</span></div>
</div>
<div class="stb"><div class="st1">: 2,053,040 ns&nbsp;&nbsp;Delta: 10</div><div class="st2">sim:/tb_vga_rom_pic</div><div class="st3">0 ps to 2155692 ns</div></div>

<script>
// waveform area, coordinates are page pixels through the viewBox
var s = '';
var G = '#00e800';
s += '<rect x="1017" y="131" width="845" height="754" fill="#000"/>';
s += '<rect x="1017" y="150" width="845" height="2" fill="#fff"/>';
s += '<rect x="1017" y="845" width="845" height="2" fill="#fff"/>';
s += '<rect x="1017" y="843.500" width="845" height="1.500" fill="#999"/>';
s += '<rect x="1020" y="868" width="842" height="1" fill="#888"/>';
for (var i = 1; i <= 10; i++) {
  var gx = Math.round(1020 + i * 78.85) + .5;
  s += '<path d="M' + gx + ' 152V843" stroke="#808080"/>';
}
// hsync: hollow pulses on the left, then alternating solid and hollow
var p = 'M1020.500 169V157M1020 169.500H1826';
var n = 0;
for (var x = 1033; x < 1824; x += 12.6) {
  var px = Math.round(x) + .5;
  var w = 2;
  if (px > 1400 && n % 2 == 0) w = 0;
  p += 'M' + px + ' 169V157H' + (px + w) + 'V169';
  if (w == 0) p += 'M' + (px + 1) + ' 169V157';
  n++;
}
s += '<path d="' + p + '" fill="none" stroke="#00ff00"/>';
// rgb bus
s += '<path d="M1027 173.500H1463.500V185.500H1027L1021 181V178z" fill="none" stroke="#b4ffb4"/>';
s += '<text x="1026" y="184" fill="#dff" font-size="10.500" font-family="Liberation Sans">16\'h0000</text>';
s += '<rect x="1463" y="173" width="363" height="13" fill="#b4ffb4"/>';
var c = 0;
for (var bx = 1475; bx < 1826; bx += 12.65) {
  var rx = Math.round(bx) + .5;
  s += '<path d="M' + rx + ' 173V177M' + rx + ' 182V186" stroke="#3a6a3a"/>';
  s += '<path d="M' + (rx - 6) + ' 179.500H' + (rx + 5) + '" stroke="#111"/>';
  if (c % 6 == 2) s += '<path d="M' + (rx - 1) + ' 176l3 3.500-3 3.500z" fill="#000"/>';
  c++;
}
// vsync, sys_clk, sys_rst_n, GSR
s += '<path d="M1020.500 197V190.500H1045.500V202.500H1826" fill="none" stroke="#00ff00"/>';
s += '<rect x="1020" y="208" width="806" height="12" fill="#00ff00"/>';
s += '<path d="M1020.500 237V224.500H1826" fill="none" stroke="#00ff00"/>';
s += '<path d="M1020.500 245V253.500H1826" fill="none" stroke="#fff" stroke-dasharray="4 3"/>';
// time ticks
for (var t = 0; t * 19.72 < 842; t++) {
  var tx = Math.round(1020 + t * 19.72) + .5;
  s += '<path d="M' + tx + (t % 5 == 0 ? ' 847V853' : ' 849V853') + '" stroke="' + G + '"/>';
}
s += '<clipPath id="tclip"><rect x="1020" y="847" width="842" height="21"/></clipPath>';
var labs = [[1020, '0 ps'], [1217, '500000000 ps'], [1413, '1000000000 ps'], [1610, '1500000000 ps'], [1807, '2000000000 ps']];
labs.forEach(function (l) {
  s += '<text clip-path="url(#tclip)" x="' + l[0] + '" y="866" text-anchor="middle" fill="' + G + '" font-size="11" font-family="Liberation Sans">' + l[1] + '</text>';
});
// cursor
s += '<rect x="1826" y="132" width="3" height="18" fill="#fc0"/><rect x="1826" y="152" width="3" height="693" fill="#fc0"/><rect x="1826" y="847" width="3" height="21" fill="#fc0"/>';
s += '<rect x="1826" y="208" width="2" height="12" fill="#f02020"/><rect x="1826" y="153" width="1" height="17" fill="#f02020"/>';
s += '<rect x="1788.500" y="869.500" width="80" height="15" fill="#000" stroke="#fc0"/>';
s += '<text x="1790" y="881" fill="#fc0" font-size="11" font-family="Liberation Sans">2053039150 ps</text>';
document.getElementById('wave').innerHTML = s;
</script>
<script src="https://cdn.jsdelivr.net/npm/bootstrap@5.3.0/dist/js/bootstrap.bundle.min.js"></script>
</body>
</html>
